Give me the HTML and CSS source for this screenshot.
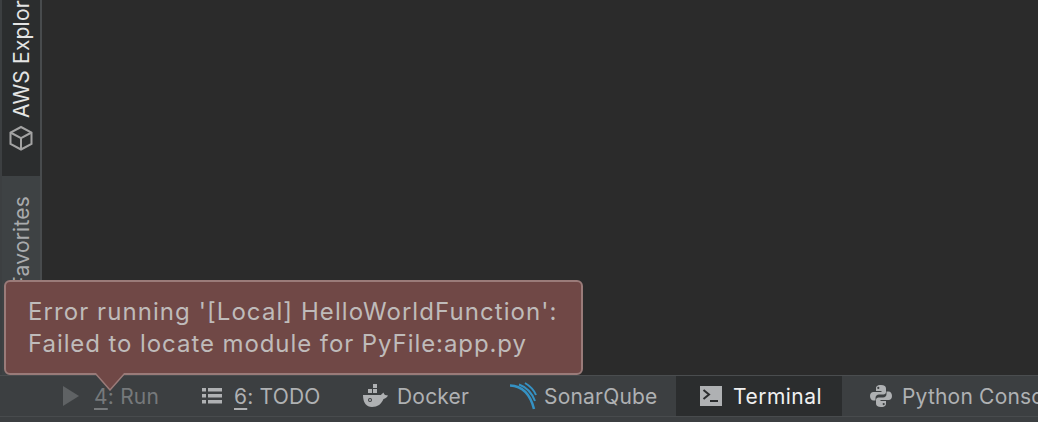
FILE: index.html
```html
<!DOCTYPE html>
<html lang="en">

<head>
    <meta charset="UTF-8">
    <title>Error running</title>
    <link rel="stylesheet" href="styles.css">
</head>

<body>
    <div class="main">
        <div class="side">
            <div class="side-tab aws">
                <svg class="cube" width="26" height="26" viewBox="0 0 26 26" fill="none" stroke="#a3a3a3" stroke-width="2">
                    <path d="M13 2 L23.5 7.5 V19 L13 24.5 L2.5 19 V7.5 Z" />
                    <path d="M2.5 7.5 L13 13.2 L23.5 7.5 M13 13.2 V24.5" />
                </svg>
                <span>AWS Explorer</span>
            </div>
            <div class="side-tab favorites"><span>2: Favorites</span></div>
        </div>
        <div class="editor"></div>
    </div>

    <div class="toolbar">
        <div class="tool dim run">
            <svg width="16" height="20" viewBox="0 0 16 20"><path d="M0 0 L16 10 L0 20 Z" fill="#5f6264" /></svg>
            <span><u>4</u>: Run</span>
        </div>
        <div class="tool todo">
            <svg width="20" height="16" viewBox="0 0 20 16" fill="#afb1b3">
                <rect x="0" y="0" width="4" height="3.5" /><rect x="6" y="0" width="14" height="3.5" />
                <rect x="0" y="6" width="4" height="3.5" /><rect x="6" y="6" width="14" height="3.5" />
                <rect x="0" y="12" width="4" height="3.5" /><rect x="6" y="12" width="14" height="3.5" />
            </svg>
            <span><u>6</u>: TODO</span>
        </div>
        <div class="tool docker">
            <svg width="26" height="24" viewBox="0 0 26 24" fill="#afb1b3">
                <rect x="11" y="0" width="4" height="4" /><rect x="6" y="5" width="4" height="4" /><rect x="11" y="5" width="4" height="4" />
                <path d="M1 11 H19 C20 9.500 21 9 21.500 8.500 C22 10 22.500 10.500 23 11 L26 11.500 C25 13.500 23.500 14.500 21.500 15 C19.500 20 15.500 23 10 23 C4.500 23 1 19 1 11 Z" />
                <circle cx="8" cy="16" r="2" fill="#3c3f41" /><circle cx="8" cy="16" r="1" fill="#afb1b3" />
            </svg>
            <span>Docker</span>
        </div>
        <div class="tool sonar">
            <svg width="27" height="28" viewBox="0 0 27 28" fill="none" stroke="#3592c4" stroke-width="2">
                <path d="M0 3.500 C11 4 20 11 24 27" stroke-width="2.500" />
                <path d="M9 2.500 C16 5 22 11 25 19" />
                <path d="M15 1 C20 4 24 8 26 13" />
            </svg>
            <span>SonarQube</span>
        </div>
        <div class="tool active term">
            <svg width="22" height="20" viewBox="0 0 22 20">
                <rect width="22" height="20" fill="#afb1b3" />
                <path d="M3.500 4 L9 8.500 L3.500 13" fill="none" stroke="#2b2d2e" stroke-width="2" />
                <rect x="10" y="14" width="8" height="2" fill="#2b2d2e" />
            </svg>
            <span>Terminal</span>
        </div>
        <div class="tool python">
            <svg width="22" height="22" viewBox="0 0 22 22" fill="#afb1b3">
                <path d="M11 0 C6.500 0 6 2 6 3.500 V6 H11.500 V7 H3.500 C1.500 7 0 8.500 0 11 C0 13.500 1.500 15.500 3.500 15.500 H5.500 V13 C5.500 11 7 9.500 9 9.500 H13.500 C15 9.500 16 8.500 16 7 V3.500 C16 1.500 14.500 0 11 0 Z M8.300 1.800 A1.100 1.100 0 1 1 8.300 4 A1.100 1.100 0 1 1 8.300 1.800 Z" fill-rule="evenodd" />
                <path d="M11 22 C15.500 22 16 20 16 18.500 V16 H10.500 V15 H18.500 C20.500 15 22 13.500 22 11 C22 8.500 20.500 6.500 18.500 6.500 H16.500 V9 C16.500 11 15 12.500 13 12.500 H8.500 C7 12.500 6 13.500 6 15 V18.500 C6 20.500 7.500 22 11 22 Z M13.700 18 A1.100 1.100 0 1 1 13.700 20.200 A1.100 1.100 0 1 1 13.700 18 Z" fill-rule="evenodd" />
            </svg>
            <span>Python Console</span>
        </div>
    </div>

    <div class="balloon">
        Error running '[Local] HelloWorldFunction':<br>
        <span class="line-two">Failed to locate module for PyFile:app.py</span>
        <svg class="tail" width="32" height="18" viewBox="0 0 32 18">
            <path d="M1 0 L16 17 L31 0" fill="#704846" stroke="#9a7b79" stroke-width="1.500" />
        </svg>
    </div>
</body>

</html>
```

FILE: styles.css
```css
* {
    margin: 0;
    padding: 0;
    box-sizing: border-box;
}

html,
body {
    height: 100%;
    overflow: hidden;
}

body {
    position: relative;
    background: #3c3f41;
    font-family: Inter, 'Noto Sans', sans-serif;
}

.main {
    display: flex;
    height: 375px;
}

.side {
    width: 42px;
    padding-left: 2px;
    background: #3c3f41;
    border-right: 2px solid #484b4d;
    overflow: hidden;
    flex-shrink: 0;
}

.side-tab {
    display: flex;
    flex-direction: column-reverse;
    align-items: center;
    font-size: 21px;
    letter-spacing: 0.2px;
    overflow: hidden;
}

.side-tab span {
    writing-mode: vertical-rl;
    transform: rotate(180deg);
    white-space: nowrap;
    flex-shrink: 0;
}

.aws {
    height: 176px;
    padding-bottom: 25px;
    gap: 7px;
    background: #2b2d2e;
    color: #e4e4e4;
}

.cube {
    flex-shrink: 0;
}

.favorites {
    height: 199px;
    justify-content: flex-end;
    padding-top: 20px;
    color: #a9abad;
    background: #3e4244;
}

.editor {
    flex: 1;
    background: #2b2b2b;
}

.toolbar {
    display: flex;
    height: 42px;
    padding-left: 6px;
    background: #3c3f41;
    border-top: 1px solid #4a4d4f;
    border-bottom: 1px solid #484b4d;
    font-size: 21px;
    letter-spacing: 0.2px;
    color: #afb1b3;
    white-space: nowrap;
}

.tool {
    display: flex;
    align-items: center;
    flex-shrink: 0;
    gap: 12px;
    padding: 0 20px;
}

.tool svg {
    flex-shrink: 0;
}

.tool u {
    text-underline-offset: 4px;
    text-decoration-thickness: 2px;
}

.dim {
    color: #76797b;
}

.run {
    width: 176px;
    padding-left: 57px;
    gap: 15px;
}

.todo {
    width: 160px;
}

.docker {
    width: 148px;
    padding-left: 20px;
    gap: 9px;
}

.sonar {
    width: 186px;
    padding-left: 20px;
    gap: 7px;
}

.active {
    background: #2b2d2e;
    color: #f0f0f0;
}

.term {
    width: 166px;
    padding-left: 24px;
    gap: 11px;
    letter-spacing: 0.5px;
}

.python {
    padding-left: 28px;
    gap: 10px;
}

.balloon {
    position: absolute;
    left: 4px;
    top: 280px;
    width: 579px;
    height: 95px;
    padding: 14px 22px;
    background: #704846;
    border: 2px solid #9a7b79;
    border-radius: 6px;
    color: #bfbbba;
    font-size: 24px;
    letter-spacing: 1.07px;
    line-height: 32px;
    white-space: nowrap;
}

.line-two {
    letter-spacing: 0.92px;
}

.tail {
    position: absolute;
    left: 88px;
    top: 91px;
}
```
